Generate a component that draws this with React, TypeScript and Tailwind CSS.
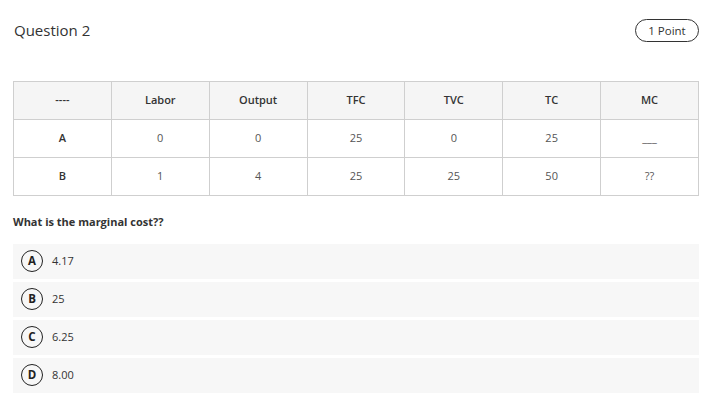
import React from 'react';

const headers = ['----', 'Labor', 'Output', 'TFC', 'TVC', 'TC', 'MC'];
const rows = [
  ['A', '0', '0', '25', '0', '25', '___'],
  ['B', '1', '4', '25', '25', '50', '??'],
];
const options = [
  { key: 'A', label: '4.17' },
  { key: 'B', label: '25' },
  { key: 'C', label: '6.25' },
  { key: 'D', label: '8.00' },
];

export default function App() {
  return (
    <div className="w-[710px] h-[414px] bg-white text-[#333] font-['Open_Sans',sans-serif]">
      <div className="flex items-center justify-between pl-[14px] pr-[11px] pt-[19px]">
        <h1 className="text-[15px] leading-[23px] text-[#333]">Question 2</h1>
        <span className="h-[23px] w-[64px] flex items-center justify-center rounded-full border border-[#333] text-[11.5px] text-[#333]">
          1 Point
        </span>
      </div>

      <div className="pl-[13px] pr-[11px] mt-[39px]">
        <table className="w-full table-fixed border-collapse text-[11px]">
          <thead>
            <tr className="bg-[#f5f5f5]">
              {headers.map((h) => (
                <th key={h} className="h-[38px] border border-[#cfcfcf] font-semibold text-center text-[#333]">
                  {h}
                </th>
              ))}
            </tr>
          </thead>
          <tbody>
            {rows.map((r) => (
              <tr key={r[0]}>
                {r.map((c, i) => (
                  <td
                    key={i}
                    className={`h-[38px] border border-[#cfcfcf] text-center ${i === 0 ? 'font-semibold text-[#333]' : 'text-[#555]'}`}
                  >
                    {c}
                  </td>
                ))}
              </tr>
            ))}
          </tbody>
        </table>
      </div>

      <p className="pl-[13px] mt-[18px] text-[11px] font-bold text-[#333]">What is the marginal cost??</p>

      <div className="pl-[13px] pr-[11px] mt-[13px] flex flex-col gap-[3px]">
        {options.map((o) => (
          <div key={o.key} className="h-[35px] bg-[#f7f7f7] flex items-center pl-[8px]">
            <span className="w-[22px] h-[22px] rounded-full border border-[#222] flex items-center justify-center text-[11.5px] font-bold text-[#222]">
              {o.key}
            </span>
            <span className="ml-[9px] text-[11px] text-[#333]">{o.label}</span>
          </div>
        ))}
      </div>
    </div>
  );
}
